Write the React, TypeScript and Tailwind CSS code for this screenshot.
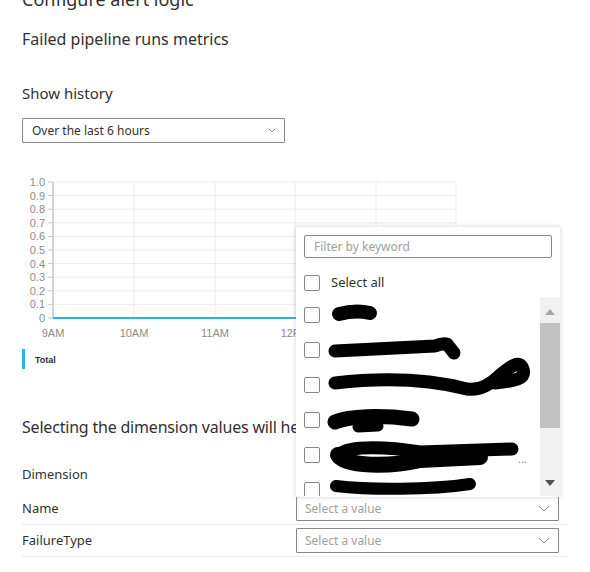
import React from 'react'

const ticksY = ['1.0', '0.9', '0.8', '0.7', '0.6', '0.5', '0.4', '0.3', '0.2', '0.1', '0']
const gridX = [31, 112, 193, 273, 354, 434]
const labelsX = [
  { x: 31, t: '9AM' },
  { x: 112, t: '10AM' },
  { x: 193, t: '11AM' },
  { x: 273, t: '12PM' },
]

function Chevron() {
  return (
    <svg width="12" height="7" viewBox="0 0 12 7" fill="none">
      <path d="M1 1l5 5 5-5" stroke="#8a8886" strokeWidth="1" />
    </svg>
  )
}

function Chart() {
  const top = 12
  const step = 13.6
  return (
    <svg width="460" height="172" className="mt-[27px] block">
      {ticksY.map((t, i) => {
        const y = top + i * step
        return (
          <g key={t}>
            <line x1="31" x2="434" y1={y} y2={y} stroke="#ececec" strokeWidth="1" />
            <line x1="26" x2="31" y1={y} y2={y} stroke="#c8c8c8" strokeWidth="1" />
            <text x="23" y={y + 4} textAnchor="end" fontSize="11" fill="#8c8c8c" fontFamily="Liberation Sans, Arial, sans-serif">
              {t}
            </text>
          </g>
        )
      })}
      {gridX.map((x) => (
        <line key={x} x1={x} x2={x} y1={top} y2={top + 10 * step} stroke="#ececec" strokeWidth="1" />
      ))}
      <line x1="31" x2="31" y1={top} y2={top + 10 * step} stroke="#c8c8c8" strokeWidth="1.5" />
      <line x1="31" x2="434" y1={top + 10 * step} y2={top + 10 * step} stroke="#2bb3e3" strokeWidth="2" />
      {labelsX.map((l) => (
        <text key={l.t} x={l.x} y="167" textAnchor="middle" fontSize="11" fill="#8c8c8c" fontFamily="Liberation Sans, Arial, sans-serif">
          {l.t}
        </text>
      ))}
    </svg>
  )
}

function Box() {
  return <span className="block w-[16px] h-[16px] shrink-0 border border-[#8a8886] rounded-[2px] bg-white" />
}

// redaction marker strokes over the list items
const scribbles: React.ReactNode[] = [
  <path key="a" d="M9 17 C20 14 32 14 40 16" strokeWidth="14" />,
  <path key="b" d="M5 19 L105 14 Q112 11 117 12 L124 21" />,
  <path key="c" d="M5 16 C40 12 90 10 137 22 C150 24 160 18 170 8 C180 0 190 -8 193 2 C196 12 185 14 165 16" />,
  <g key="d">
    <path d="M5 20 C20 14 50 13 82 17" strokeWidth="15" />
    <path d="M28 25 L48 24" strokeWidth="11" />
  </g>,
  <g key="e">
    <path d="M10 17 C20 8 60 10 90 15 L182 12" />
    <path d="M8 18 C15 30 60 30 90 23 L150 20" strokeWidth="16" />
  </g>,
  <path key="f" d="M6 14 C40 18 100 18 140 12" strokeWidth="12" />,
]

function Popup() {
  return (
    <div className="absolute left-[296px] top-[227px] w-[264px] h-[270px] bg-white shadow-[0_0_5px_rgba(0,0,0,0.18)] flex flex-col">
      <div className="px-[8px] pt-[8px]">
        <div className="h-[23px] border border-[#8a8886] rounded-[2px] flex items-center px-[9px] text-[12px] text-[#a19f9d]">
          Filter by keyword
        </div>
      </div>
      <div className="flex items-center gap-[11px] pl-[8px] mt-[16px] h-[17px] text-[13px] text-[#323130]">
        <Box />
        <span>Select all</span>
      </div>
      <div className="flex mt-[6px] h-[199px] overflow-hidden">
        <div className="flex-1 flex flex-col">
          {scribbles.map((s, i) => (
            <div key={i} className="h-[35px] shrink-0 flex items-center pl-[8px] gap-[10px]">
              <Box />
              <svg width="210" height="35" className="overflow-visible shrink-0">
                <g stroke="#000" strokeWidth="13" strokeLinecap="round" strokeLinejoin="round" fill="none">
                  {s}
                </g>
                {i === 4 && (
                  <text x="188" y="26" fontSize="11" fill="#8a8886">
                    ...
                  </text>
                )}
              </svg>
            </div>
          ))}
        </div>
        <div className="w-[24px] mr-[1px] bg-[#f1f1f1] flex flex-col items-center">
          <svg width="10" height="6" className="mt-[12px]">
            <path d="M0 6 L5 0 L10 6 Z" fill="#a6a6a6" />
          </svg>
          <div className="w-[20px] h-[105px] mt-[8px] bg-[#c1c1c1]" />
          <div className="flex-1" />
          <svg width="10" height="6" className="mb-[10px]">
            <path d="M0 0 L5 6 L10 0 Z" fill="#505050" />
          </svg>
        </div>
      </div>
    </div>
  )
}

function DimRow({ label }: { label: string }) {
  return (
    <div className="w-[546px] h-[32px] flex items-center border-b border-[#edebe9]">
      <div className="w-[274px] text-[13px] text-[#323130]">{label}</div>
      <div className="w-[263px] h-[25px] border border-[#8a8886] rounded-[1px] flex items-center justify-between px-[8px]">
        <span className="text-[12px] text-[#a19f9d]">Select a value</span>
        <Chevron />
      </div>
    </div>
  )
}

export default function App() {
  return (
    <div className="relative w-[590px] h-[572px] overflow-hidden bg-white pl-[22px] text-[#323130]" style={{ fontFamily: '"Noto Sans", "Open Sans", sans-serif' }}>
      <div className="-mt-[12px] text-[18px] leading-[22px]">Configure alert logic</div>
      <div className="mt-[18px] text-[16px] leading-[22px]">Failed pipeline runs metrics</div>
      <div className="mt-[33px] text-[15px] leading-[20px]">Show history</div>
      <div className="mt-[15px] w-[263px] h-[25px] border border-[#8a8886] rounded-[1px] flex items-center justify-between pl-[9px] pr-[8px]">
        <span className="text-[12px]">Over the last 6 hours</span>
        <svg width="8" height="5" viewBox="0 0 8 5" fill="none">
          <path d="M0.5 0.5l3.5 3.5 3.5-3.5" stroke="#8a8886" strokeWidth="1" />
        </svg>
      </div>
      <Chart />
      <div className="mt-[7px] flex items-center h-[20px]">
        <span className="w-[3px] h-[20px] bg-[#2bb3e3]" />
        <span className="ml-[10px] mt-[4px] text-[9px] font-bold" style={{ fontFamily: '"Liberation Sans", Arial, sans-serif' }}>Total</span>
      </div>
      <div className="mt-[47px] text-[16px] leading-[22px] whitespace-nowrap tracking-[-0.2px]">Selecting the dimension values will help you filter</div>
      <div className="mt-[27px] text-[13px] leading-[18px]">Dimension</div>
      <div className="mt-[10px]">
        <DimRow label="Name" />
        <DimRow label="FailureType" />
      </div>
      <Popup />
    </div>
  )
}
